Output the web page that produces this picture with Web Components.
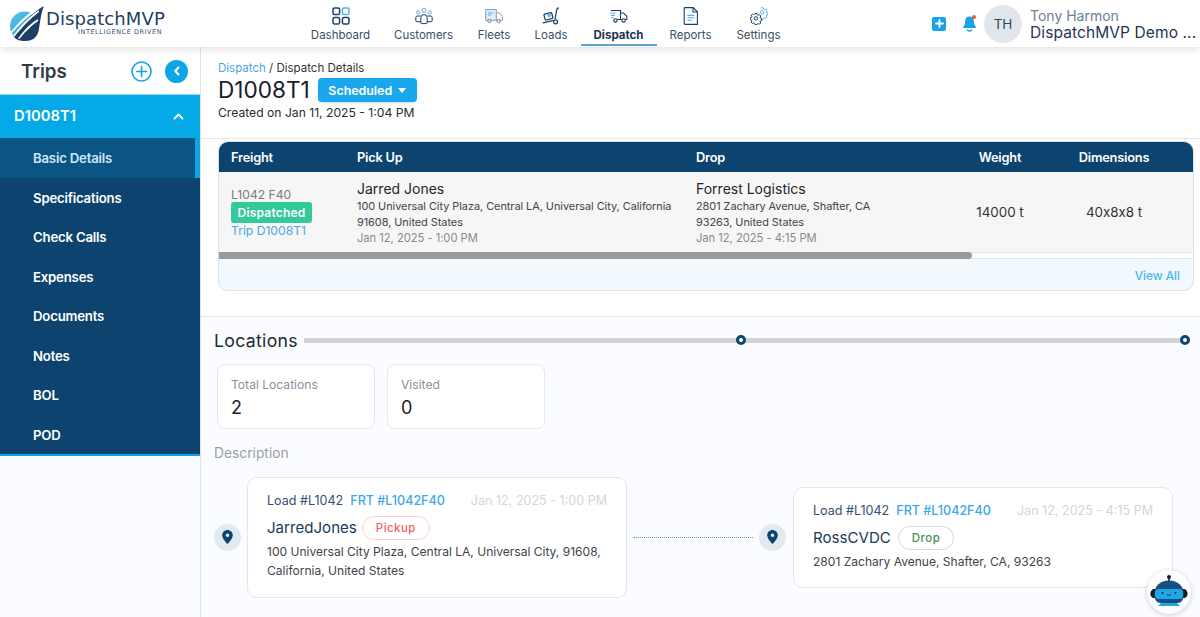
<!DOCTYPE html>
<html lang="en"><head><meta charset="utf-8"><title>Dispatch Details</title>
<style>
html,body{margin:0;height:617px;overflow:hidden;background:#fbfcff;font-family:Inter,"Liberation Sans",sans-serif;color:#1c2b3a}
</style></head><body>
<app-shell>
  <app-header slot="header"></app-header>
  <trip-sidebar slot="side"></trip-sidebar>
  <dispatch-main slot="main"></dispatch-main>
</app-shell>
<bot-fab></bot-fab>
<script>
function def(name,css,html){
  customElements.define(name,class extends HTMLElement{
    connectedCallback(){
      if(this.shadowRoot)return;
      const r=this.attachShadow({mode:'open'});
      const a=n=>this.getAttribute(n)||'';
      r.innerHTML='<style>'+css+'</style>'+(typeof html==='function'?html(a):html);
    }
  });
}
def('app-shell',`:host{display:grid;grid-template-columns:201px 1fr;grid-template-rows:47px 570px;width:1200px;height:617px}
::slotted([slot=header]){grid-column:1/3}`,`<slot name="header"></slot><slot name="side"></slot><slot name="main"></slot>`);

const ICONS={
dashboard:`<svg viewBox="0 0 18 18" width="18" height="18" fill="none" stroke-width="1.5"><rect x="1" y="1" width="6.6" height="6.6" rx="1.6" stroke="#1d3f66"/><rect x="10.4" y="1" width="6.6" height="6.6" rx="1.6" stroke="#5aaee6"/><rect x="1" y="10.4" width="6.6" height="6.6" rx="1.6" stroke="#1d3f66"/><rect x="10.4" y="10.4" width="6.6" height="6.6" rx="1.6" stroke="#1d3f66"/></svg>`,
customers:`<svg viewBox="0 0 18 18" width="18" height="18" fill="none" stroke-width="1"><circle cx="9" cy="3.4" r="2" stroke="#5aaee6"/><circle cx="3.2" cy="5.4" r="1.5" stroke="#5aaee6"/><circle cx="14.8" cy="5.4" r="1.5" stroke="#5aaee6"/><path d="M5.8 16v-5.2a3.2 3.2 0 0 1 6.4 0V16a1 1 0 0 1-1 .6H6.8a1 1 0 0 1-1-.6z" stroke="#1d3f66"/><path d="M5.8 9H2.2A1.5 1.5 0 0 0 .8 10.5v3.2c0 .6.5 1 1 1h4M12.2 9h3.6a1.5 1.5 0 0 1 1.4 1.5v3.2c0 .6-.5 1-1 1h-4" stroke="#1d3f66"/></svg>`,
fleets:`<svg viewBox="0 0 18 18" width="18" height="18" fill="none" stroke-width="1"><path d="M.7 2.5h10.6v10.8H.7z" fill="#dcebf6" stroke="#8b9fb3"/><path d="M11.3 6h3.2l2.8 3.4v3.9h-6" stroke="#8b9fb3"/><path d="M3 6h5M3 8h3" stroke="#5aaee6"/><circle cx="4.4" cy="14" r="1.6" fill="#fff" stroke="#5f7f9c"/><circle cx="13.6" cy="14" r="1.6" fill="#fff" stroke="#5f7f9c"/></svg>`,
loads:`<svg viewBox="0 0 18 18" width="18" height="18" fill="none" stroke="#1d3f66" stroke-width="1.2"><path d="M17 .8c-1.8 0-2.1 1-2.4 2.4l-1.6 9.2"/><rect x="2.3" y="6.4" width="8" height="6" rx=".8" transform="rotate(-14 6 9)"/><path d="M6 7.4l2-.5.5 2-2 .5z" stroke="#5aaee6"/><path d="M.8 15.8l10.6-2.4"/><circle cx="13.6" cy="14.8" r="2"/></svg>`,
dispatch:`<svg viewBox="0 0 18 18" width="18" height="18" fill="none" stroke-width="1.1"><path d="M1 3.5h9.5v9H7.2M10.5 6h3l3.3 3.3v3.2h-1.4M10.5 12.5h1.4" stroke="#1d3f66"/><path d="M.4 6h5M.9 8.4h4M1.4 10.8h2.6" stroke="#5aaee6"/><circle cx="5.4" cy="13.4" r="1.7" stroke="#1d3f66"/><circle cx="13.6" cy="13.4" r="1.7" stroke="#1d3f66"/></svg>`,
reports:`<svg viewBox="0 0 18 18" width="18" height="18" fill="none" stroke-width="1.1"><path d="M3 .6h8.2L15.4 4.8v12.6H3a.8.8 0 0 1-.8-.8V1.4A.8.8 0 0 1 3 .6z" stroke="#1d3f66"/><path d="M11 .8v4.2h4.2" stroke="#1d3f66"/><path d="M5.4 8.4h7M5.4 10.8h7M5.4 13.2h4.6" stroke="#5aaee6"/></svg>`,
settings:`<svg viewBox="0 0 18 18" width="18" height="18" fill="none" stroke-width="1"><circle cx="12.2" cy="5.4" r="1.7" stroke="#5aaee6"/><path d="M11.2.8h2l.3 1.2 1.2.5 1.1-.6 1.2 1.3-.7 1.1.4 1.1 1.2.4v1.9l-1.2.3-.4 1.1.6 1.1-1.3 1.2-1.1-.6-1.2.5-.3 1.1h-2" stroke="#5aaee6"/><circle cx="6" cy="11.4" r="1.7" stroke="#1d3f66"/><path d="M5 6.6h2l.3 1.2 1.2.5 1.1-.6 1.2 1.3-.7 1.1.4 1.1 1.2.4v1.9l-1.2.3-.4 1.1.6 1.1-1.2 1.2-1.1-.6-1.2.5L7 17.6H5l-.3-1.2-1.2-.5-1.1.6-1.2-1.3.7-1.1-.4-1.1L.3 12.6v-1.9l1.2-.3.4-1.1-.7-1.1L2.4 7l1.1.6 1.2-.5z" stroke="#1d3f66"/></svg>`};

def('nav-item',`:host{display:flex;flex-direction:column;align-items:center;height:47px;box-sizing:border-box;padding-top:7px;font-size:11.5px;color:#3b4f64}
:host([active]){font-weight:700;color:#1d3553;border-bottom:2px solid #5aa5d3;height:46px}
.t{margin-top:3px;line-height:14px;white-space:nowrap}svg{display:block}`,a=>`${ICONS[a('icon')]}<div class="t"><slot></slot></div>`);

def('app-header',`:host{display:flex;align-items:flex-start;height:47px;background:#fff;box-shadow:0 2px 8px rgba(0,0,0,.13);position:relative;z-index:3}
.logo{width:311.5px;flex:none;padding:5px 0 0 9px;box-sizing:border-box;display:flex}
.logotext{display:flex;flex-direction:column;margin-left:1px;padding-top:5px}
.name{font:500 18px/18px "DejaVu Sans",sans-serif;color:#1f3f63;letter-spacing:.1px;white-space:nowrap}
.tag{font:500 6.4px/7px "DejaVu Sans",sans-serif;color:#2c5278;letter-spacing:.62px;margin:1px 0 0 32px;white-space:nowrap}
nav{display:flex;width:470px;flex:none}
nav nav-item:nth-child(1){width:58px}nav nav-item:nth-child(2){width:58px;margin-left:25px}nav nav-item:nth-child(3){width:33px;margin-left:25px}nav nav-item:nth-child(4){width:33px;margin-left:24px}nav nav-item:nth-child(5){width:76px;margin-left:13px}nav nav-item:nth-child(6){width:42px;margin-left:13px}nav nav-item:nth-child(7){width:44px;margin-left:25px}
.right{display:flex;align-items:center;margin-left:auto;height:47px;width:269px;box-sizing:border-box}
.plus{width:14px;height:14px;margin-left:1px;background:#18a3e6;border-radius:2px;display:flex;align-items:center;justify-content:center}
.bell{margin-left:16px;position:relative;width:15px;height:17px}
.dot{position:absolute;top:0;right:1px;width:4px;height:4px;background:#f0523e;border-radius:50%}
.av{width:38px;height:38px;margin-left:7px;border-radius:50%;background:#e1e6ec;display:flex;align-items:center;justify-content:center;font-size:13.5px;color:#33465c}
.u{margin-left:8px;display:flex;flex-direction:column;padding-top:1px}
.u1{font-size:14px;line-height:16px;color:#6c7f93}
.u2{font-size:15.5px;line-height:17px;color:#1f3655;white-space:nowrap;letter-spacing:.1px}`,
`<div class="logo">
<svg width="36" height="37" viewBox="0 0 36 37"><defs><linearGradient id="g" x1="0" y1="0" x2="1" y2="1"><stop offset="0" stop-color="#62c8f0"/><stop offset="1" stop-color="#1b86c8"/></linearGradient></defs>
<circle cx="15.5" cy="21" r="14.5" fill="url(#g)"/>
<path d="M35 1C31 3 24 8 19 14L13 23 4 31c3 4 7 5 12 5 7 0 11-3 13-8 2-6 2-18 6-27z" fill="#1d3f66"/>
<path d="M25 5C17 10 8 19 1 28l.8 1.400C9 21 18 12 27 6zM30 5C21 11 12 20 4 31l1.200 1C13 22 22 13 30 7zM29 14C22 18 15 25 9 33.500l1.300 .6C16 27 23 20 29 16z" fill="#fff"/></svg>
<div class="logotext"><div class="name">DispatchMVP</div><div class="tag">INTELLIGENCE DRIVEN</div></div></div>
<nav><nav-item icon="dashboard">Dashboard</nav-item><nav-item icon="customers">Customers</nav-item><nav-item icon="fleets">Fleets</nav-item><nav-item icon="loads">Loads</nav-item><nav-item icon="dispatch" active>Dispatch</nav-item><nav-item icon="reports">Reports</nav-item><nav-item icon="settings">Settings</nav-item></nav>
<div class="right">
<div class="plus"><svg width="9" height="9" viewBox="0 0 9 9"><path d="M4.500 1v7M1 4.500h7" stroke="#fff" stroke-width="1.800" stroke-linecap="round"/></svg></div>
<div class="bell"><svg width="15" height="17" viewBox="0 0 15 17"><path d="M7.500 1.600c-2.700 0-4.400 2-4.400 4.600 0 3-.8 4.400-2 5.600-.4.500 0 1.200.6 1.200h11.600c.6 0 1-.7.6-1.200-1.200-1.200-2-2.600-2-5.600 0-2.600-1.700-4.600-4.400-4.600z" fill="#18a3e6"/><path d="M5 14.600c.6 1 1.400 1.400 2.500 1.400s1.900-.4 2.500-1.400" stroke="#18a3e6" stroke-width="1.300" fill="none"/></svg><span class="dot"></span></div>
<div class="av">TH</div>
<div class="u"><div class="u1">Tony Harmon</div><div class="u2">DispatchMVP Demo ...</div></div>
</div>`);

def('side-item',`:host{display:flex;align-items:center;height:39.5px;box-sizing:border-box;padding-left:33px;font-size:13.2px;font-weight:600;color:#fff;letter-spacing:-.2px;background:#0d446f}
:host([active]){background:#0b5585;color:#cfe6f5;border-right:5px solid #0ea5e4}`,`<slot></slot>`);

def('trip-sidebar',`:host{display:block;background:#fbfcff;border-right:1px solid #dfe3e8;height:570px;box-sizing:border-box}
.top{display:flex;align-items:center;height:47px;box-sizing:border-box;padding:1px 12px 0 21px;background:#fff}
h2{margin:0;font-size:18.7px;font-weight:600;color:#2f3b47;flex:1}
.add{margin-right:13px;display:block}.back{width:23px;height:23px;border-radius:50%;background:#0ea5e4;display:flex;align-items:center;justify-content:center}
.acc{display:flex;align-items:center;justify-content:space-between;height:44.4px;background:#06a9e8;border-top:1px solid #8bd3f2;box-sizing:border-box;padding:0 16px 1px 14px;color:#fff;font-size:14.8px;font-weight:600}
.list{border-bottom:2px solid #0ea5e4;display:block}`,
`<div class="top"><h2>Trips</h2>
<svg class="add" width="21" height="21" viewBox="0 0 21 21" fill="none" stroke="#0ea5e4" stroke-width="1.600"><circle cx="10.500" cy="10.500" r="9.500"/><path d="M10.500 5.500v10M5.500 10.500h10" stroke-linecap="round"/></svg>
<div class="back"><svg width="8" height="10" viewBox="0 0 8 10" fill="none" stroke="#fff" stroke-width="2" stroke-linecap="round" stroke-linejoin="round"><path d="M5.500 1.500L2.200 5l3.300 3.500"/></svg></div></div>
<div class="acc"><span>D1008T1</span><svg width="11" height="7" viewBox="0 0 11 7" fill="none" stroke="#fff" stroke-width="1.800" stroke-linecap="round" stroke-linejoin="round"><path d="M1.500 5.500l4-4 4 4"/></svg></div>
<div class="list"><side-item active>Basic Details</side-item><side-item>Specifications</side-item><side-item>Check Calls</side-item><side-item>Expenses</side-item><side-item>Documents</side-item><side-item>Notes</side-item><side-item>BOL</side-item><side-item>POD</side-item></div>`);

def('page-head',`:host{display:block;background:#fff;height:92px;box-sizing:border-box;padding:14px 0 0 17px;border-bottom:1px solid #e4e7ea}
.bc{font-size:11.5px;line-height:15px;color:#333}.bc b{font-weight:400;color:#4ca6e0}
.row{display:flex;align-items:center;height:26px;margin-top:1px}
h1{margin:0;font-size:22.6px;font-weight:400;color:#15202b;line-height:26px}
.st{margin-left:8px;background:#1ba7ee;color:#fff;border-radius:4px;height:24px;width:99px;box-sizing:border-box;display:flex;align-items:center;justify-content:center;gap:6px;font-size:12.4px;font-weight:600;box-shadow:0 1px 2px rgba(0,0,0,.15)}
.st i{width:0;height:0;border:4px solid transparent;border-top:5px solid #fff;border-bottom:0}
.cr{font-size:12.15px;line-height:16px;margin-top:2px;color:#2b2b2b}`,
`<div class="bc"><b>Dispatch</b> / Dispatch Details</div><div class="row"><h1>D1008T1</h1><div class="st">Scheduled<i></i></div></div><div class="cr">Created on Jan 11, 2025 - 1:04 PM</div>`);

def('freight-table',`:host{display:block;background:#fff;padding:2px 6px 25px 17px;height:178px;box-sizing:border-box;border-bottom:1px solid #e6e8eb}
.t{border:1px solid #dbe2e8;border-radius:10px;overflow:hidden;background:#f1f8fe;height:150px;box-sizing:border-box}
.g{display:grid;grid-template-columns:138px 339px 269px 70px 1fr}
.h{background:#0d446f;color:#fff;height:30px;align-items:center;font-size:12.8px;font-weight:600;letter-spacing:-.2px}
.h div:first-child,.b>div:first-child{padding-left:12px}
.b{background:#f6f6f6;height:80px;box-sizing:border-box;padding-top:2px;align-items:center;font-size:10.9px;letter-spacing:-.03px;line-height:16px;color:#444}
.b>div:first-child{margin-top:-1px}
.c{text-align:center}.h .c{white-space:nowrap}
.nm{font-size:14px;line-height:17px;color:#22262a;display:block;letter-spacing:0;margin-bottom:1px}
.dt{color:#8b8b8b;display:block;font-size:11.2px}
.fid{color:#7c7c7c;font-size:12.2px;line-height:15px;display:block}
.tag{display:inline-block;background:#34c99b;color:#fff;font-weight:600;font-size:12px;line-height:21px;height:21px;width:81px;text-align:center;border-radius:3px;letter-spacing:.2px}
.tr{color:#4ca6e0;font-size:12.2px;line-height:15px;display:block}
.val{font-size:13.4px;color:#333;text-align:center;white-space:nowrap;font-feature-settings:"calt" 0;margin-top:-2px}
.sb{height:7px;background:#fff;border:solid #e4e7ea;border-width:1px 0;box-sizing:border-box}
.sb i{display:block;height:7px;margin-top:-1px;width:753px;background:#9a9a9a;border-radius:0 4px 4px 0}
.f{height:32px;display:flex;align-items:center;justify-content:flex-end;padding:1px 13px 0 0;box-sizing:border-box;font-size:11.8px;font-weight:500;color:#4db4ec}`,
`<div class="t"><div class="g h"><div>Freight</div><div>Pick Up</div><div>Drop</div><div class="c">Weight</div><div class="c">Dimensions</div></div>
<div class="g b"><div><span class="fid">L1042 F40</span><span class="tag">Dispatched</span><span class="tr">Trip D1008T1</span></div>
<div><span class="nm">Jarred Jones</span>100 Universal City Plaza, Central LA, Universal City, California<br>91608, United States<span class="dt">Jan 12, 2025 - 1:00 PM</span></div>
<div><span class="nm">Forrest Logistics</span>2801 Zachary Avenue, Shafter, CA<br>93263, United States<span class="dt">Jan 12, 2025 - 4:15 PM</span></div>
<div class="val">14000 t</div><div class="val">40x8x8 t</div></div>
<div class="sb"><i></i></div><div class="f">View All</div></div>`);

def('stat-card',`:host{display:block;width:158px;height:65px;box-sizing:border-box;border:1px solid #e5e8ec;border-radius:8px;background:#fff;padding:12px 13px 0}
.l{font-size:12.1px;line-height:15px;color:#8a9099}.v{font-size:18px;line-height:22px;margin-top:5px;color:#1c2228}`,
a=>`<div class="l">${a('label')}</div><div class="v"><slot></slot></div>`);

def('pin-dot',`:host{display:flex;flex:none;width:27px;height:27px;border-radius:50%;background:#e3e9f1;align-items:center;justify-content:center}`,
`<svg width="11" height="14" viewBox="0 0 11 14"><path fill-rule="evenodd" d="M5.500 0C2.500 0 .2 2.300.2 5.200.2 9 5.500 14 5.500 14s5.300-5 5.300-8.800C10.800 2.300 8.500 0 5.500 0zm0 7a1.800 1.800 0 1 1 0-3.600 1.800 1.800 0 0 1 0 3.600z" fill="#0d446f"/></svg>`);

def('stop-card',`:host{display:block;box-sizing:border-box;width:380px;border:1px solid #e3e6ea;border-radius:10px;background:#fff;padding:15px 19px 0}
.r1{display:flex;font-size:12.55px;line-height:16px;color:#34506e}
.frt{color:#3ea7e8;font-weight:500;margin-left:7px}.dt{color:#d3d6da;margin-left:auto}
.r2{display:flex;align-items:center;margin-top:7px;height:24px}
.nm{font-size:15.1px;color:#20395a}
.pill{height:22px;padding:0 13px;border-radius:12px;display:flex;align-items:center;font-size:11.4px;font-weight:500;letter-spacing:.5px}
:host([kind=pickup]) .pill{margin-left:5px;color:#f26262;border:1px solid #f7cfcf}
:host([kind=drop]) .pill{margin-left:7px;color:#3f9057;border:1px solid #cbe0d8}
.ad{font-size:12.05px;line-height:19px;color:#3d444c;margin-top:2px}`,
a=>`<div class="r1"><span>Load #L1042</span><span class="frt">FRT #L1042F40</span><span class="dt">${a('date')}</span></div>
<div class="r2"><span class="nm">${a('name')}</span><span class="pill">${a('label')}</span></div><div class="ad"><slot></slot></div>`);

def('locations-panel',`:host{display:block;padding:11px 10px 0 13px}
.top{display:flex;align-items:center;height:24px}
h3{margin:0;font-size:17.7px;font-weight:400;color:#20282f;letter-spacing:.3px}
.track{flex:1;margin-left:6px;height:5px;background:#d2d3d5;display:flex;align-items:center;justify-content:space-between;padding-left:432px}
.n{width:4px;height:4px;border:3.5px solid #0d446f;border-radius:50%;background:#fff;flex:none}
.stats{display:flex;gap:12px;margin:12px 0 0 3px}
.d{font-size:13.8px;line-height:18px;color:#9a9ea3;margin-top:15px}
.tl{display:flex;align-items:center;margin-top:15px;height:120px}
.tl pin-dot:first-child{margin-right:6px}
.dots{width:120px;margin:0 6px;border-top:1px dotted #7f9ab3;flex:none}
.tl stop-card:last-child{margin-left:7px}`,
`<div class="top"><h3>Locations</h3><div class="track"><span class="n"></span><span class="n"></span></div></div>
<div class="stats"><stat-card label="Total Locations">2</stat-card><stat-card label="Visited">0</stat-card></div>
<div class="d">Description</div>
<div class="tl"><pin-dot></pin-dot><stop-card kind="pickup" name="JarredJones" label="Pickup" date="Jan 12, 2025 - 1:00 PM" style="height:121px">100 Universal City Plaza, Central LA, Universal City, 91608, California, United States</stop-card><div class="dots"></div><pin-dot></pin-dot><stop-card kind="drop" name="RossCVDC" label="Drop" date="Jan 12, 2025 - 4:15 PM" style="height:101px">2801 Zachary Avenue, Shafter, CA, 93263</stop-card></div>`);

def('dispatch-main',`:host{display:block;height:570px;overflow:hidden;background:#fbfcff}`,`<page-head></page-head><freight-table></freight-table><locations-panel></locations-panel>`);

def('bot-fab',`:host{position:fixed;left:1147px;top:570px;width:44px;height:44px;border-radius:50%;background:#fff;box-shadow:0 1px 5px rgba(0,0,0,.2);display:flex;align-items:center;justify-content:center;z-index:5}`,
`<svg width="40" height="36" viewBox="0 0 40 36"><circle cx="20" cy="3" r="2" fill="#15202b"/><path d="M19.200 3h1.600v4h-1.600z" fill="#15202b"/><path d="M4 15c-3 2-4 7 0 9h4v-9zM36 15c3 2 4 7 0 9h-4v-9z" fill="#15202b"/><path d="M20 6.500C11 6.500 5.500 12 5.500 20c0 6 2 9 6 9h17c4 0 6-3 6-9 0-8-5.500-13.500-14.500-13.500z" fill="#17507f"/><rect x="6" y="15" width="28" height="10" rx="4" fill="#20a6e6"/><circle cx="13.500" cy="19" r="1" fill="#0d2c46"/><circle cx="26.500" cy="19" r="1" fill="#0d2c46"/><path d="M18 20.500c1 1 3 1 4 0" stroke="#0d2c46" stroke-width=".8" fill="none"/><path d="M12 29h16l3 3H9z" fill="#20a6e6"/></svg>`);
</script>
</body></html>
